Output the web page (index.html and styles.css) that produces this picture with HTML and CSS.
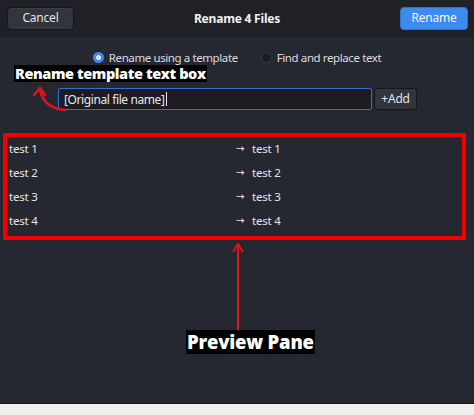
FILE: index.html
```html
<!DOCTYPE html>
<html>
<head>
<meta charset="utf-8">
<link rel="stylesheet" href="styles.css">
</head>
<body>
<div class="window">
  <header class="headerbar">
    <button class="btn cancel">Cancel</button>
    <div class="title">Rename 4 Files</div>
    <button class="btn suggested">Rename</button>
  </header>
  <div class="content">
    <div class="modes">
      <label class="radio"><span class="dot checked"></span>Rename using a template</label>
      <label class="radio"><span class="dot"></span>Find and replace text</label>
    </div>
    <div class="entry-row">
      <div class="entry">[Original file name]<span class="caret"></span></div>
      <button class="btn add">+Add</button>
    </div>
    <div class="preview">
      <div class="row"><span class="old">test 1</span><span class="arrow">→</span><span class="new">test 1</span></div>
      <div class="row"><span class="old">test 2</span><span class="arrow">→</span><span class="new">test 2</span></div>
      <div class="row"><span class="old">test 3</span><span class="arrow">→</span><span class="new">test 3</span></div>
      <div class="row"><span class="old">test 4</span><span class="arrow">→</span><span class="new">test 4</span></div>
    </div>
  </div>
  <div class="note note-entry">Rename template text box</div>
  <svg class="curve" width="40" height="30" viewBox="0 0 40 30">
    <path d="M34 26 C22 25 12 20 9 6" fill="none" stroke="#e8101a" stroke-width="2.5" stroke-linecap="round"/>
    <path d="M3 11 L9 4 L14 11" fill="none" stroke="#e8101a" stroke-width="2.5" stroke-linecap="round" stroke-linejoin="round"/>
  </svg>
  <svg class="uparrow" width="14" height="92" viewBox="0 0 14 92">
    <path d="M7 3 L7 90" stroke="#e8101a" stroke-width="2"/>
    <path d="M2 11 L7 3 L12 11" fill="none" stroke="#e8101a" stroke-width="2" stroke-linejoin="round"/>
  </svg>
  <div class="note note-preview">Preview Pane</div>
</div>
</body>
</html>
```
FILE: styles.css
```css
html, body {
  margin: 0;
  padding: 0;
}
body {
  background: #eeeeee;
  width: 474px;
  height: 415px;
  overflow: hidden;
  font-family: "Noto Sans", "DejaVu Sans", sans-serif;
  font-size: 11.5px;
  letter-spacing: -0.2px;
  color: #e6e6e8;
}
.window {
  position: relative;
  width: 474px;
  height: 404px;
  background: #262831;
  border-bottom: 1px solid #17181c;
  box-sizing: border-box;
}
.headerbar {
  height: 37px;
  background: #202127;
  border-bottom: 1px solid #1a1b20;
  box-sizing: border-box;
  display: flex;
  align-items: center;
  justify-content: space-between;
  padding: 0 6px 0 7px;
}
.btn {
  font-family: inherit;
  font-size: 12px;
  letter-spacing: -0.2px;
  color: #e2e2e4;
  border-radius: 4px;
  border: 1px solid #16171b;
  background: #33353d;
  height: 23px;
  padding: 0;
  line-height: 20px;
}
.cancel {
  width: 67px;
  box-shadow: inset 0 1px 0 rgba(255,255,255,0.05);
}
.suggested {
  width: 68px;
  background: #3d8af0;
  border-color: #2f73cf;
  color: #f4f8ff;
}
.title {
  font-weight: bold;
  font-size: 12px;
  color: #f0f0f0;
}
.content {
  display: flex;
  flex-direction: column;
}
.modes {
  display: flex;
  justify-content: center;
  gap: 23px;
  margin-top: 14px;
  height: 13px;
  align-items: center;
}
.radio {
  display: flex;
  align-items: center;
  gap: 5px;
  line-height: 13px;
  letter-spacing: -0.4px;
  color: #dcdcdf;
}
.dot {
  width: 11px;
  height: 11px;
  border-radius: 50%;
  background: #1c1d22;
  border: 1px solid #3a3c44;
  box-sizing: border-box;
}
.dot.checked {
  background: #3d8af0;
  border: 3px solid #3d8af0;
  box-shadow: inset 0 0 0 2px #ffffff;
}
.entry-row {
  display: flex;
  margin: 24px 0 0 58px;
  gap: 2px;
  height: 22px;
}
.entry {
  width: 314px;
  box-sizing: border-box;
  border: 1.5px solid #2f6fd0;
  background: #1c1d23;
  border-radius: 2px;
  padding-left: 5px;
  font-size: 12px;
  letter-spacing: -0.4px;
  line-height: 19px;
  color: #e8e8ea;
  display: flex;
  align-items: center;
}
.caret {
  width: 1px;
  height: 14px;
  background: #e8e8ea;
  margin-left: 1px;
}
.add {
  width: 43px;
  height: 22px;
  font-size: 12px;
  border-radius: 3px;
}
.preview {
  margin: 23px 0 0 3px;
  width: 463px;
  height: 107px;
  box-sizing: border-box;
  border: 4px solid #f20000;
  display: flex;
  flex-direction: column;
}
.row {
  height: 24px;
  box-sizing: border-box;
  padding: 0 0 2px 2px;
  display: flex;
  align-items: center;
}
.old {
  width: 227px;
}
.arrow {
  width: 16px;
  font-size: 10px;
}
.note {
  position: absolute;
  background: #000000;
  color: #ffffff;
  font-family: "Open Sans", "DejaVu Sans", sans-serif;
  font-weight: 800;
  white-space: nowrap;
}
.note-entry {
  left: 14px;
  top: 65px;
  height: 17px;
  line-height: 17px;
  font-size: 14.5px;
  letter-spacing: -0.4px;
  padding: 0 1px;
}
.note-preview {
  left: 186px;
  top: 330px;
  height: 24px;
  line-height: 24px;
  font-size: 18.5px;
  letter-spacing: -0.2px;
  padding: 0 1px;
}
.curve {
  position: absolute;
  left: 31px;
  top: 84px;
}
.uparrow {
  position: absolute;
  left: 231px;
  top: 241px;
}
```
